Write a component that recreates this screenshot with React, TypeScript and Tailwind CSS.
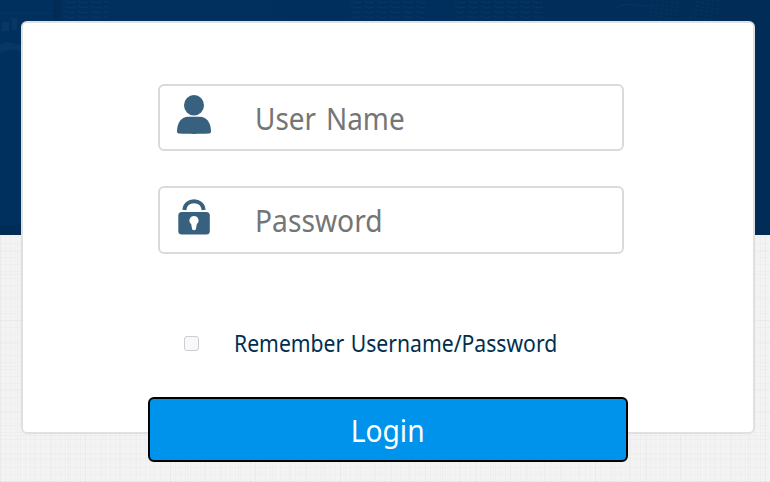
import React, { useState } from 'react';

function UserIcon() {
  return (
    <svg className="shrink-0" width="36" height="40" viewBox="0 0 36 40" fill="#38607f" aria-hidden="true">
      <ellipse cx="18" cy="10.2" rx="10" ry="10.2" />
      <path d="M1 36.500C1 27 6 21.700 12 21.700h12c6 0 11 5.300 11 14.800 0 1.500-1 1.900-2.500 2.100-8.500.5-20.500.5-29 0C2 38.400 1 38 1 36.500z" />
    </svg>
  );
}

function LockIcon() {
  return (
    <svg className="shrink-0" width="36" height="40" viewBox="0 0 36 40" fill="none" aria-hidden="true">
      <path d="M8.300 13C9 7.200 13 4.300 18 4.300S27 7.200 27.700 13" stroke="#38607f" strokeWidth="4" />
      <rect x="2.300" y="15" width="31.500" height="22.500" rx="3.500" fill="#38607f" />
      <path d="M18 19a4.600 4.600 0 0 0-2.800 8.200l1 5.300q1.800 1.600 3.600 0l1-5.300A4.600 4.600 0 0 0 18 19z" fill="#fff" />
    </svg>
  );
}

// faint skyline behind the login card
function Skyline() {
  return (
    <svg className="absolute left-0 top-0" width="770" height="235" viewBox="0 0 770 235" fill="none" aria-hidden="true">
      <defs>
        <linearGradient id="sky" x1="0" y1="0" x2="1" y2="0">
          <stop offset="0" stopColor="#00305e" />
          <stop offset="0.5" stopColor="#002f5d" />
          <stop offset="1" stopColor="#002c57" />
        </linearGradient>
        <pattern id="floors" width="13" height="5" patternUnits="userSpaceOnUse">
          <path d="M0 1l5 2 5-1" stroke="#1c4a70" strokeWidth="1" />
        </pattern>
        <pattern id="tower" width="5" height="4" patternUnits="userSpaceOnUse" patternTransform="rotate(8)">
          <path d="M0 1h3" stroke="#164875" strokeWidth="1" />
        </pattern>
      </defs>
      <rect width="770" height="235" fill="url(#sky)" />
      <g opacity="0.35">
        <path d="M63 0h45v21H63z" fill="url(#floors)" />
        <path d="M350 0h75v21h-75zM455 0h90v21h-90z" fill="url(#floors)" />
        <path d="M650 0h32l-6 21h-32zM695 0h26l-6 21h-26z" fill="url(#tower)" />
        <path d="M2 22h7v9H2zM12 18h5v12h-5zM0 44c8-4 14 0 21 1v8c-7-5-12-4-21 0z" fill="#17456d" />
        <path d="M0 13h52M615 8c15-8 25 1 40-3" stroke="#17456d" />
      </g>
      <path d="M53 0h8v21h-8zM0 225h21v10H0z" fill="#002951" opacity="0.6" />
    </svg>
  );
}

export default function App() {
  const [remember, setRemember] = useState(false);

  return (
    <div
      className="relative h-[482px] w-[770px] overflow-hidden bg-[#f3f3f3] bg-[repeating-linear-gradient(90deg,rgba(0,0,0,0.014)_0_1px,transparent_1px_5px),repeating-linear-gradient(0deg,rgba(0,0,0,0.014)_0_1px,transparent_1px_7px),repeating-linear-gradient(90deg,rgba(0,0,0,0.02)_0_1px,transparent_1px_17px),repeating-linear-gradient(0deg,rgba(0,0,0,0.02)_0_1px,transparent_1px_23px)] p-[21px] pr-[15px] font-['Noto_Sans',sans-serif]"
    >
      <Skyline />
      <form
        className="relative flex h-[413px] flex-col rounded-md border-2 border-[#e0e0e0] bg-white pl-[135px] pt-[61px]"
        onSubmit={(e) => e.preventDefault()}
      >
        <label className="flex h-[67px] w-[466px] shrink-0 items-start rounded-md border-2 border-[#dadada] pl-4 pt-[9px]">
          <UserIcon />
          <input
            type="text"
            placeholder="User Name"
            className="ml-[43px] mt-px h-11 w-[340px] origin-left scale-x-[0.9] text-[31px] [word-spacing:3px] outline-none placeholder:text-[#757575]"
          />
        </label>

        <label className="mt-[35px] flex h-[68px] w-[466px] shrink-0 items-start rounded-md border-2 border-[#dadada] pl-4 pt-[9px]">
          <LockIcon />
          <input
            type="password"
            placeholder="Password"
            className="ml-[43px] mt-px h-11 w-[340px] origin-left scale-x-[0.91] text-[31px] outline-none placeholder:text-[#757575]"
          />
        </label>

        <label className="ml-[26px] mt-[71px] flex h-9 shrink-0 items-center text-[#002f4d]">
          <input
            type="checkbox"
            checked={remember}
            onChange={(e) => setRemember(e.target.checked)}
            className="size-[15px] appearance-none rounded-[3px] border border-[#cbccd4] bg-[#f8f8f8] checked:bg-[#0093eb]"
          />
          <span className="ml-[35px] origin-left scale-x-[0.92] whitespace-nowrap text-[23px] [word-spacing:1px]">
            Remember Username/Password
          </span>
        </label>

        <button
          type="submit"
          className="-ml-[10px] mt-[36px] h-[65px] w-[480px] shrink-0 rounded-md border-2 border-black bg-[#0093eb] pt-0.5 text-[31px] text-white"
        >
          <span className="inline-block scale-x-[0.91]">Login</span>
        </button>
      </form>
    </div>
  );
}
